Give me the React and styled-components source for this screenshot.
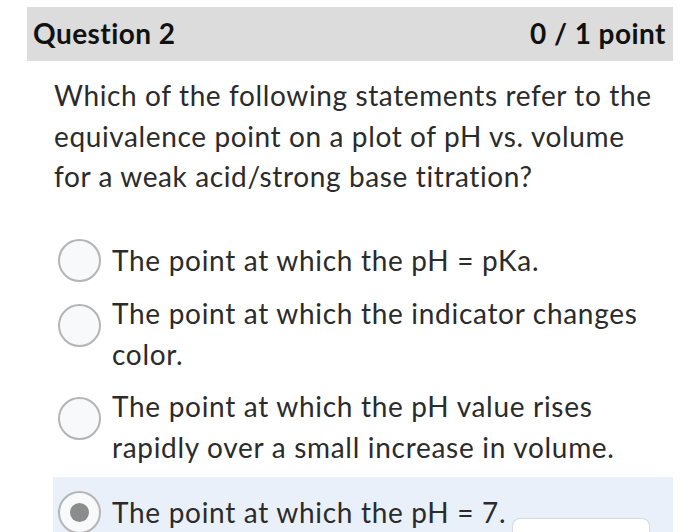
import React from "react";
import styled, { createGlobalStyle } from "styled-components";

const Global = createGlobalStyle`
  html, body { margin: 0; padding: 0; background: #ffffff; }
  body {
    font-family: Lato, "Open Sans", sans-serif;
    color: #2b2b2b;
    overflow: hidden;
    font-variant-ligatures: none;
  }
`;

const Page = styled.div`
  width: 646px;
  padding: 7px 0 0 27px;
`;

const Header = styled.div`
  height: 54px;
  background: #dcdcdc;
  display: flex;
  align-items: center;
  justify-content: space-between;
  padding: 0 7px 2px 6px;
  box-sizing: border-box;
  font-weight: 700;
  font-size: 28px;
  letter-spacing: 0.45px;
  color: #111;
`;

const Question = styled.p`
  margin: 0;
  padding: 14px 6px 0 27px;
  font-size: 28px;
  letter-spacing: 0.62px;
  line-height: 40.5px;
  color: #2b2b2b;
`;

const List = styled.div`
  margin: 43px 0 0 26px;
  display: flex;
  flex-direction: column;
  gap: 11px;
`;

const Row = styled.div`
  display: flex;
  align-items: flex-start;
  gap: 11px;
  padding: ${(p) => (p.$selected ? "15px 5px 0" : "0 5px")};
  margin-top: ${(p) => (p.$selected ? "-2px" : "0")};
  background: ${(p) => (p.$selected ? "#eaf0f9" : "transparent")};
  position: relative;
`;

const Radio = styled.span`
  flex: none;
  box-sizing: border-box;
  width: 43px;
  height: 43px;
  border-radius: 50%;
  border: 2px solid #b5b5b5;
  background: #f8f9fb;
  margin-top: ${(p) => p.$offset}px;
  display: flex;
  align-items: center;
  justify-content: center;
`;

const Dot = styled.span`
  width: 19px;
  height: 19px;
  border-radius: 50%;
  background: #8c8c8c;
`;

const Label = styled.span`
  font-size: 28px;
  letter-spacing: 0.7px;
  line-height: 41px;
  color: #2b2b2b;
`;

const Popup = styled.div`
  position: absolute;
  left: 459px;
  top: 41px;
  width: 136px;
  height: 20px;
  background: #fff;
  border: 1px solid #d6dae0;
  border-bottom: none;
  border-radius: 8px 8px 0 0;
`;

const options = [
  { text: "The point at which the pH = pKa.", offset: -1 },
  { text: "The point at which the indicator changes color.", offset: 11.5 },
  { text: "The point at which the pH value rises rapidly over a small increase in volume.", offset: 11.5 },
  { text: "The point at which the pH = 7.", offset: -1, selected: true },
];

export default function App() {
  return (
    <Page>
      <Global />
      <Header>
        <span>Question 2</span>
        <span>0 / 1 point</span>
      </Header>
      <Question>
        Which of the following statements refer to the equivalence point on a plot of pH vs. volume for a weak acid/strong base titration?
      </Question>
      <List>
        {options.map((o) => (
          <Row key={o.text} $selected={o.selected}>
            <Radio $offset={o.offset}>{o.selected && <Dot />}</Radio>
            <Label>{o.text}</Label>
            {o.selected && <Popup />}
          </Row>
        ))}
      </List>
    </Page>
  );
}
